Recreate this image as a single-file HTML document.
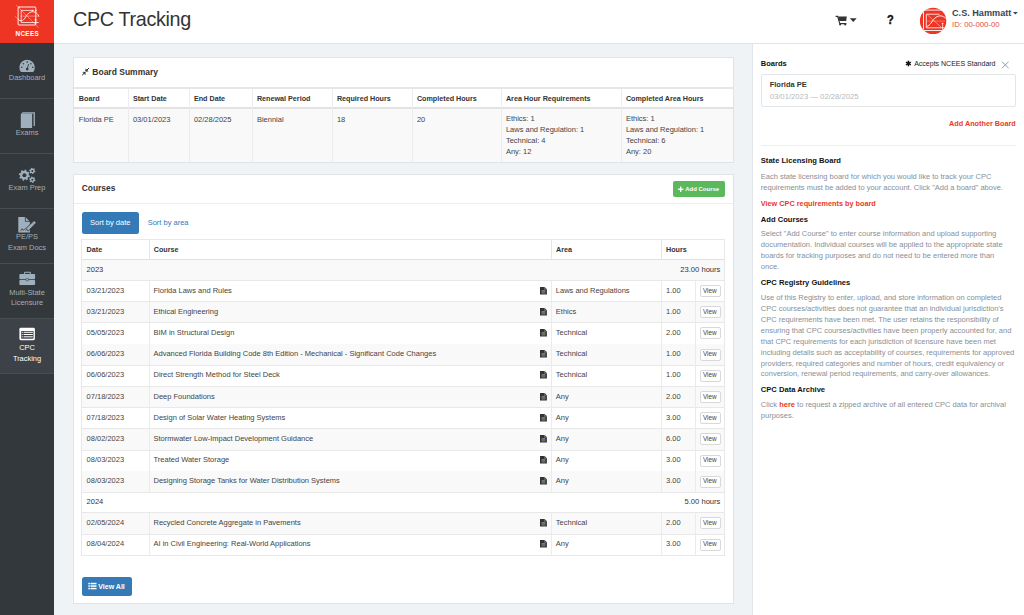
<!DOCTYPE html>
<html><head><meta charset="utf-8">
<style>
*{box-sizing:border-box;margin:0;padding:0}
html,body{width:1024px;height:615px;overflow:hidden}
body{position:relative;background:#eff3f6;font-family:"Liberation Sans",sans-serif;color:#333;font-size:7.5px}
.abs{position:absolute}
.t1{position:absolute;white-space:nowrap}
svg{position:absolute;overflow:visible}
</style></head><body>
<div class="abs" style="left:0px;top:0px;width:54px;height:615px;background:#33383c"></div>
<div class="abs" style="left:0px;top:0px;width:54px;height:43px;background:#ee3524"></div>
<div class="abs" style="left:0px;top:318px;width:54px;height:55px;background:#3c4248"></div>
<div class="abs" style="left:0px;top:98px;width:54px;height:1px;background:#484d52"></div>
<div class="abs" style="left:0px;top:153px;width:54px;height:1px;background:#484d52"></div>
<div class="abs" style="left:0px;top:208px;width:54px;height:1px;background:#484d52"></div>
<div class="abs" style="left:0px;top:263px;width:54px;height:1px;background:#484d52"></div>
<div class="abs" style="left:0px;top:318px;width:54px;height:1px;background:#484d52"></div>
<div class="abs" style="left:0px;top:373px;width:54px;height:1px;background:#484d52"></div>
<div class="t1" style="left:0;width:54px;text-align:center;top:72.02px;font-size:7.45px;line-height:12px;color:#a5afb7">Dashboard</div>
<div class="t1" style="left:0;width:54px;text-align:center;top:127.42px;font-size:7.45px;line-height:12px;color:#a5afb7">Exams</div>
<div class="t1" style="left:0;width:54px;text-align:center;top:182.42px;font-size:7.45px;line-height:12px;color:#a5afb7">Exam Prep</div>
<div class="t1" style="left:0;width:54px;text-align:center;top:231.22px;font-size:7.45px;line-height:12px;color:#a5afb7">PE/PS</div>
<div class="t1" style="left:0;width:54px;text-align:center;top:242.32px;font-size:7.45px;line-height:12px;color:#a5afb7">Exam Docs</div>
<div class="t1" style="left:0;width:54px;text-align:center;top:286.52px;font-size:7.45px;line-height:12px;color:#a5afb7">Multi-State</div>
<div class="t1" style="left:0;width:54px;text-align:center;top:297.32px;font-size:7.45px;line-height:12px;color:#a5afb7">Licensure</div>
<div class="t1" style="left:0;width:54px;text-align:center;top:342.02px;font-size:7.45px;line-height:12px;color:#fff">CPC</div>
<div class="t1" style="left:0;width:54px;text-align:center;top:352.52px;font-size:7.45px;line-height:12px;color:#fff">Tracking</div>
<svg style="left:0;top:0" width="54" height="43" viewBox="0 0 54 43">
<g fill="none" stroke="#fff" stroke-linecap="round">
<path stroke-width="0.9" d="M19 7 H35 Q35.8 7 35.8 7.8 V24.2 Q35.8 25 35 25 H19 Q18.1 25 18.1 24.2 V7.8 Q18.1 7 19 7 Z"/>
<path stroke-width="0.75" d="M32.9 10.4 H21.2 V22.5 H38.4"/>
<line stroke-width="0.5" stroke-opacity="0.75" x1="16.2" y1="5.1" x2="38.4" y2="27.5"/>
<line stroke-width="0.5" stroke-opacity="0.8" x1="15.3" y1="16.5" x2="18.5" y2="19.5"/>
<line stroke-width="0.5" stroke-opacity="0.75" x1="21.2" y1="16.1" x2="38.8" y2="16.1"/>
<path stroke-width="0.85" d="M18.5 19.5 Q19.6 21 21.5 20.8 C24.5 20.5, 26 15.5, 28 13.8 C30 12, 32 11.4, 34 11.9 C36.5 12.5, 38 14.2, 38.8 16.1"/>
<path stroke-width="0.7" d="M35.6 24.1 V19.1 M34.9 19.9 L35.6 19 L36.3 19.9"/>
<circle stroke-width="0.6" cx="32.5" cy="10.6" r="0.5"/><circle stroke-width="0.5" cx="35.8" cy="10.6" r="0.4"/>
</g>
<text x="27.3" y="36" text-anchor="middle" font-family="Liberation Sans" font-weight="bold" font-size="6.3" letter-spacing="0.35" fill="#fff">NCEES</text>
</svg>
<svg style="left:0;top:43px" width="54" height="55" viewBox="0 0 54 55">
<path d="M21 29.1 A7.7 7.7 0 1 1 33.2 29.1 Z" fill="#9fb0bc" />
<g fill="#33383c"><circle cx="27.2" cy="19.1" r="0.8"/><circle cx="23.4" cy="20.7" r="0.8"/><circle cx="30.9" cy="20.7" r="0.8"/><circle cx="21.8" cy="24.3" r="0.8"/><circle cx="32.7" cy="24.3" r="0.8"/><circle cx="27.2" cy="26.1" r="1.35"/></g>
<line x1="27.2" y1="26" x2="28.6" y2="21.2" stroke="#33383c" stroke-width="0.9"/>
</svg>
<svg style="left:0;top:98px" width="54" height="55" viewBox="0 0 54 55">
<path d="M22.3 14.3 H34.9 V27.9 H33.6 V15.6 H22.3 Z" fill="#9fb0bc"/>
<path d="M20.8 16.9 Q20.8 15.8 21.6 15.2 L22.3 14.6 V15.6 L32.1 15.6 V30 H20.8 Z" fill="#9fb0bc"/>
</svg>
<svg style="left:0;top:153px" width="54" height="55" viewBox="0 0 54 55"><polygon points="28.80,22.20 29.98,22.73 29.65,24.14 28.37,24.10 27.51,25.31 27.97,26.51 26.74,27.29 25.86,26.35 24.40,26.60 23.87,27.78 22.46,27.45 22.50,26.17 21.29,25.31 20.09,25.77 19.31,24.54 20.25,23.66 20.00,22.20 18.82,21.67 19.15,20.26 20.43,20.30 21.29,19.09 20.83,17.89 22.06,17.11 22.94,18.05 24.40,17.80 24.93,16.62 26.34,16.95 26.30,18.23 27.51,19.09 28.71,18.63 29.49,19.86 28.55,20.74" fill="#9fb0bc"/><circle cx="24.4" cy="22.2" r="2.0" fill="#33383c"/><polygon points="34.70,17.90 35.47,18.30 35.15,19.35 34.28,19.25 33.50,19.98 33.54,20.85 32.47,21.10 32.12,20.29 31.10,19.98 30.37,20.45 29.62,19.64 30.14,18.94 29.90,17.90 29.13,17.50 29.45,16.45 30.32,16.55 31.10,15.82 31.06,14.95 32.13,14.70 32.48,15.51 33.50,15.82 34.23,15.35 34.98,16.16 34.46,16.86" fill="#9fb0bc"/><circle cx="32.3" cy="17.9" r="1.0" fill="#33383c"/><polygon points="34.70,26.70 35.47,27.10 35.15,28.15 34.28,28.05 33.50,28.78 33.54,29.65 32.47,29.90 32.12,29.09 31.10,28.78 30.37,29.25 29.62,28.44 30.14,27.74 29.90,26.70 29.13,26.30 29.45,25.25 30.32,25.35 31.10,24.62 31.06,23.75 32.13,23.50 32.48,24.31 33.50,24.62 34.23,24.15 34.98,24.96 34.46,25.66" fill="#9fb0bc"/><circle cx="32.3" cy="26.7" r="1.0" fill="#33383c"/></svg>
<svg style="left:0;top:208px" width="54" height="55" viewBox="0 0 54 55">
<path d="M18.3 8.9 H25.4 L29.9 13.4 V24.5 H18.3 Z" fill="#9fb0bc"/>
<path d="M25.4 8.9 V13.4 H29.9" fill="none" stroke="#33383c" stroke-width="0.8"/>
<line x1="26.6" y1="22.2" x2="35.2" y2="13.7" stroke="#33383c" stroke-width="4"/>
<line x1="27.3" y1="21.5" x2="35" y2="13.9" stroke="#9fb0bc" stroke-width="2.6"/>
<line x1="33.3" y1="15.6" x2="34.2" y2="16.4" stroke="#33383c" stroke-width="0.6"/>
<path d="M25.7 23.2 L26.3 21.6 L27.6 22.8 Z" fill="#9fb0bc"/>
<polyline points="20.6,23.2 22,20.7 23.1,22.3 24.3,21.2 25.6,22.4" fill="none" stroke="#33383c" stroke-width="0.8"/>
</svg>
<svg style="left:0;top:263px" width="54" height="55" viewBox="0 0 54 55">
<path d="M24.1 10.9 L24.1 9.5 Q24.1 8.7 24.9 8.7 L30 8.7 Q30.8 8.7 30.8 9.5 L30.8 10.9 L29.8 10.9 L29.8 9.7 L25.1 9.7 L25.1 10.9 Z" fill="#9fb0bc"/>
<rect x="19.4" y="10.9" width="15.7" height="5.4" rx="0.8" fill="#9fb0bc"/>
<rect x="19.4" y="16.9" width="15.7" height="5.1" rx="0.8" fill="#9fb0bc"/>
<rect x="25.9" y="15.6" width="2.6" height="2.2" rx="0.3" fill="#9fb0bc" stroke="#33383c" stroke-width="0.5"/>
</svg>
<svg style="left:0;top:318px" width="54" height="55" viewBox="0 0 54 55">
<rect x="19.4" y="9.8" width="15.5" height="12.4" rx="1.4" fill="#fff"/>
<rect x="21.2" y="13" width="12.3" height="7.7" fill="#3c4248"/>
<g fill="#fff"><rect x="21.8" y="13.8" width="0.9" height="1"/><rect x="21.8" y="16" width="0.9" height="1"/><rect x="21.8" y="18.3" width="0.9" height="1"/>
<rect x="23.6" y="13.8" width="9.2" height="1"/><rect x="23.6" y="16" width="9.2" height="1"/><rect x="23.6" y="18.3" width="9.2" height="1"/></g>
</svg>
<div class="abs" style="left:54px;top:0px;width:970px;height:43px;background:#fff"></div>
<div class="abs" style="left:54px;top:43px;width:970px;height:1px;background:#dde3e9"></div>
<div class="t1" style="left:73px;top:12.94px;font-size:19.8px;line-height:12px;font-weight:normal;color:#333;letter-spacing:-0.35px">CPC Tracking</div>
<svg style="left:830px;top:8px" width="30" height="24" viewBox="0 0 30 24">
<path d="M5.6 8.4 L7.6 8.4 L9.8 15.6 L16.4 15.6" fill="none" stroke="#333" stroke-width="1.1"/>
<path d="M8 8.6 L16.8 8.6 L16.2 13.1 L9.3 13.1 Z" fill="#333"/>
<circle cx="10.1" cy="16.4" r="1" fill="#333"/><circle cx="15.2" cy="16.4" r="1" fill="#333"/>
<path d="M19.8 10.3 L26.7 10.3 L23.25 14 Z" fill="#333"/>
</svg>
<div class="t1" style="left:886.6px;top:14.44px;font-size:12px;line-height:12px;font-weight:bold;color:#111;-webkit-text-stroke:0.35px #111;transform:scaleX(0.92);transform-origin:left">?</div>
<svg style="left:915px;top:3px" width="36" height="36" viewBox="0 0 36 36">
<defs><clipPath id="cc"><circle cx="18.1" cy="17.9" r="13.2"/></clipPath></defs>
<circle cx="18.1" cy="17.9" r="13.2" fill="#ee3524"/>
<g clip-path="url(#cc)" fill="none" stroke="#fff">
<line stroke-width="0.9" x1="9.5" y1="7.1" x2="27" y2="7.1"/>
<line stroke-width="0.9" x1="9" y1="27.5" x2="27" y2="27.5"/>
<line stroke-width="0.9" x1="8.5" y1="8" x2="8.5" y2="26.5"/>
<path stroke-width="0.8" d="M24.5 11.2 H11.3 V24.8 H29.5"/>
<line stroke-width="0.55" stroke-opacity="0.8" x1="12.2" y1="11.7" x2="26.5" y2="24.5"/>
<line stroke-width="0.55" stroke-opacity="0.6" x1="12.2" y1="18.1" x2="30" y2="18.1"/>
<path stroke-width="0.95" d="M11.8 23.3 C15 23, 17 18, 19.5 15.5 C21.5 13.5, 24 12.6, 26 12.9 C28 13.2, 29.5 14.2, 30.8 15.3"/>
<path stroke-width="0.7" d="M27.6 27.5 V20 M26.9 20.9 L27.6 19.9 L28.3 20.9"/>
</g>
</svg>
<div class="t1" style="left:952px;top:6.83px;font-size:9.15px;line-height:12px;font-weight:bold;color:#3b4450;">C.S. Hammatt</div>
<svg style="left:1012px;top:11px" width="8" height="5" viewBox="0 0 8 5"><path d="M1 1 L5.8 1 L3.4 3.6 Z" fill="#3b4450"/></svg>
<div class="t1" style="left:952px;top:19.10px;font-size:7.8px;line-height:12px;font-weight:normal;color:#e74c3c;">ID: 00-000-00</div>
<div class="abs" style="left:752px;top:44px;width:272px;height:571px;background:#fff;border-left:1px solid #e1e6ea"></div>
<div class="t1" style="left:760.8px;top:58.00px;font-size:7.5px;line-height:12px;font-weight:bold;color:#111;">Boards</div>
<svg style="left:903px;top:59px" width="10" height="10" viewBox="0 0 10 10"><g stroke="#111" stroke-width="1.5" stroke-linecap="butt"><line x1="5.4" y1="1.7" x2="5.4" y2="7.3"/><line x1="3" y1="3.1" x2="7.8" y2="5.9"/><line x1="3" y1="5.9" x2="7.8" y2="3.1"/></g></svg>
<div class="t1" style="left:914.2px;top:58.17px;font-size:7.0px;line-height:12px;font-weight:normal;color:#222;">Accepts NCEES Standard</div>
<svg style="left:1000px;top:60px" width="10" height="10" viewBox="0 0 10 10"><g stroke="#8494a1" stroke-width="0.9"><line x1="2" y1="1.6" x2="8.6" y2="8.2"/><line x1="8.6" y1="1.6" x2="2" y2="8.2"/></g></svg>
<div class="abs" style="left:760.8px;top:74.4px;width:255px;height:32.2px;border:1px solid #e3e6e9;border-radius:2px;background:#fff"></div>
<div class="t1" style="left:769.7px;top:78.90px;font-size:7.5px;line-height:12px;font-weight:bold;color:#333;">Florida PE</div>
<div class="t1" style="left:769.7px;top:90.63px;font-size:7.7px;line-height:12px;font-weight:normal;color:#b5b9bd;">03/01/2023 &mdash; 02/28/2025</div>
<div class="t1" style="right:8.30px;top:117.98px;font-size:7.26px;line-height:12px;font-weight:bold;color:#e8392b;text-align:right;">Add Another Board</div>
<div class="abs" style="left:760.8px;top:145px;width:255px;height:1px;background:#eceff2"></div>
<div class="t1" style="left:760.8px;top:155.47px;font-size:7.6px;line-height:12px;font-weight:bold;color:#111;">State Licensing Board</div>
<div class="t1" style="left:760.8px;top:170.70px;font-size:7.5px;line-height:12px;font-weight:normal;color:#878f98;">Each state licensing board for which you would like to track your CPC</div>
<div class="t1" style="left:760.8px;top:181.80px;font-size:7.5px;line-height:12px;font-weight:normal;color:#878f98;">requirements must be added to your account. Click "Add a board" above.</div>
<div class="t1" style="left:760.8px;top:197.97px;font-size:7.3px;line-height:12px;font-weight:bold;color:#e8392b;">View CPC requirements by board</div>
<div class="t1" style="left:760.8px;top:213.67px;font-size:7.6px;line-height:12px;font-weight:bold;color:#111;">Add Courses</div>
<div class="t1" style="left:760.8px;top:228.40px;font-size:7.5px;line-height:12px;font-weight:normal;color:#878f98;">Select "Add Course" to enter course information and upload supporting</div>
<div class="t1" style="left:760.8px;top:239.30px;font-size:7.5px;line-height:12px;font-weight:normal;color:#878f98;">documentation. Individual courses will be applied to the appropriate state</div>
<div class="t1" style="left:760.8px;top:250.20px;font-size:7.5px;line-height:12px;font-weight:normal;color:#878f98;">boards for tracking purposes and do not need to be entered more than</div>
<div class="t1" style="left:760.8px;top:261.10px;font-size:7.5px;line-height:12px;font-weight:normal;color:#878f98;">once.</div>
<div class="t1" style="left:760.8px;top:276.67px;font-size:7.6px;line-height:12px;font-weight:bold;color:#111;">CPC Registry Guidelines</div>
<div class="t1" style="left:760.8px;top:292.40px;font-size:7.5px;line-height:12px;font-weight:normal;color:#878f98;">Use of this Registry to enter, upload, and store information on completed</div>
<div class="t1" style="left:760.8px;top:303.25px;font-size:7.5px;line-height:12px;font-weight:normal;color:#878f98;">CPC courses/activities does not guarantee that an individual jurisdiction's</div>
<div class="t1" style="left:760.8px;top:314.10px;font-size:7.5px;line-height:12px;font-weight:normal;color:#878f98;">CPC requirements have been met. The user retains the responsibility of</div>
<div class="t1" style="left:760.8px;top:324.95px;font-size:7.5px;line-height:12px;font-weight:normal;color:#878f98;">ensuring that CPC courses/activities have been properly accounted for, and</div>
<div class="t1" style="left:760.8px;top:335.80px;font-size:7.5px;line-height:12px;font-weight:normal;color:#878f98;">that CPC requirements for each jurisdiction of licensure have been met</div>
<div class="t1" style="left:760.8px;top:346.65px;font-size:7.5px;line-height:12px;font-weight:normal;color:#878f98;">including details such as acceptability of courses, requirements for approved</div>
<div class="t1" style="left:760.8px;top:357.50px;font-size:7.5px;line-height:12px;font-weight:normal;color:#878f98;">providers, required categories and number of hours, credit equivalency or</div>
<div class="t1" style="left:760.8px;top:368.35px;font-size:7.5px;line-height:12px;font-weight:normal;color:#878f98;">conversion, renewal period requirements, and carry-over allowances.</div>
<div class="t1" style="left:760.8px;top:384.17px;font-size:7.6px;line-height:12px;font-weight:bold;color:#111;">CPC Data Archive</div>
<div class="t1" style="left:760.8px;top:398.90px;font-size:7.5px;line-height:12px;font-weight:normal;color:#878f98;">Click <b style="color:#e8392b">here</b> to request a zipped archive of all entered CPC data for archival</div>
<div class="t1" style="left:760.8px;top:409.70px;font-size:7.5px;line-height:12px;font-weight:normal;color:#878f98;">purposes.</div>
<div class="abs" style="left:73px;top:57px;width:661px;height:106px;background:#fff;border:1px solid #e0e4e8"></div>
<svg style="left:78px;top:62px" width="14" height="16" viewBox="0 0 14 16">
<g stroke="#222" stroke-width="1.0" stroke-linecap="round" fill="#222">
<line x1="4.5" y1="12.9" x2="6.2" y2="11.3"/><path d="M5.2 10.3 L7.3 10.2 L7.2 12.3 Z" stroke-width="0.5"/>
<line x1="10.7" y1="6.3" x2="8.8" y2="8.2"/><path d="M9.8 9.2 L7.7 9.3 L7.8 7.2 Z" stroke-width="0.5"/>
</g></svg>
<div class="t1" style="left:92.3px;top:65.85px;font-size:8.5px;line-height:12px;font-weight:bold;color:#333;">Board Summary</div>
<div class="abs" style="left:74px;top:87.4px;width:659px;height:1.3px;background:#e4e6e8"></div>
<div class="abs" style="left:74px;top:108px;width:659px;height:54px;background:#f9f9f9"></div>
<div class="abs" style="left:74px;top:107.4px;width:659px;height:1.3px;background:#e2e2e2"></div>
<div class="abs" style="left:128px;top:88.5px;width:1px;height:73.5px;background:#ececec"></div>
<div class="abs" style="left:189px;top:88.5px;width:1px;height:73.5px;background:#ececec"></div>
<div class="abs" style="left:252px;top:88.5px;width:1px;height:73.5px;background:#ececec"></div>
<div class="abs" style="left:332px;top:88.5px;width:1px;height:73.5px;background:#ececec"></div>
<div class="abs" style="left:412px;top:88.5px;width:1px;height:73.5px;background:#ececec"></div>
<div class="abs" style="left:501px;top:88.5px;width:1px;height:73.5px;background:#ececec"></div>
<div class="abs" style="left:621px;top:88.5px;width:1px;height:73.5px;background:#ececec"></div>
<div class="t1" style="left:78.80000000000001px;top:93.00px;font-size:7.2px;line-height:12px;font-weight:bold;color:#333;">Board</div>
<div class="t1" style="left:132.9px;top:93.00px;font-size:7.2px;line-height:12px;font-weight:bold;color:#333;">Start Date</div>
<div class="t1" style="left:193.9px;top:93.00px;font-size:7.2px;line-height:12px;font-weight:bold;color:#333;">End Date</div>
<div class="t1" style="left:256.9px;top:93.00px;font-size:7.2px;line-height:12px;font-weight:bold;color:#333;">Renewal Period</div>
<div class="t1" style="left:336.9px;top:93.00px;font-size:7.2px;line-height:12px;font-weight:bold;color:#333;">Required Hours</div>
<div class="t1" style="left:416.9px;top:93.00px;font-size:7.2px;line-height:12px;font-weight:bold;color:#333;">Completed Hours</div>
<div class="t1" style="left:505.9px;top:93.00px;font-size:7.2px;line-height:12px;font-weight:bold;color:#333;">Area Hour Requirements</div>
<div class="t1" style="left:625.9px;top:93.00px;font-size:7.2px;line-height:12px;font-weight:bold;color:#333;">Completed Area Hours</div>
<div class="t1" style="left:78.80000000000001px;top:113.60px;font-size:7.5px;line-height:12px;font-weight:normal;color:#444;">Florida PE</div>
<div class="t1" style="left:132.9px;top:113.60px;font-size:7.5px;line-height:12px;font-weight:normal;color:#444;">03/01/2023</div>
<div class="t1" style="left:193.9px;top:113.60px;font-size:7.5px;line-height:12px;font-weight:normal;color:#444;">02/28/2025</div>
<div class="t1" style="left:256.9px;top:113.60px;font-size:7.5px;line-height:12px;font-weight:normal;color:#444;">Biennial</div>
<div class="t1" style="left:336.9px;top:113.60px;font-size:7.5px;line-height:12px;font-weight:normal;color:#444;">18</div>
<div class="t1" style="left:416.9px;top:113.60px;font-size:7.5px;line-height:12px;font-weight:normal;color:#444;">20</div>
<div class="t1" style="left:505.9px;top:113.40px;font-size:7.5px;line-height:12px;font-weight:normal;color:#444;">Ethics: 1</div>
<div class="t1" style="left:505.9px;top:124.15px;font-size:7.5px;line-height:12px;font-weight:normal;color:#444;">Laws and Regulation: 1</div>
<div class="t1" style="left:505.9px;top:134.90px;font-size:7.5px;line-height:12px;font-weight:normal;color:#444;">Technical: 4</div>
<div class="t1" style="left:505.9px;top:145.65px;font-size:7.5px;line-height:12px;font-weight:normal;color:#444;">Any: 12</div>
<div class="t1" style="left:625.9px;top:113.40px;font-size:7.5px;line-height:12px;font-weight:normal;color:#444;">Ethics: 1</div>
<div class="t1" style="left:625.9px;top:124.15px;font-size:7.5px;line-height:12px;font-weight:normal;color:#444;">Laws and Regulation: 1</div>
<div class="t1" style="left:625.9px;top:134.90px;font-size:7.5px;line-height:12px;font-weight:normal;color:#444;">Technical: 6</div>
<div class="t1" style="left:625.9px;top:145.65px;font-size:7.5px;line-height:12px;font-weight:normal;color:#444;">Any: 20</div>
<div class="abs" style="left:73px;top:174px;width:661px;height:430px;background:#fff;border:1px solid #e0e4e8"></div>
<div class="t1" style="left:81.8px;top:182.09px;font-size:8.4px;line-height:12px;font-weight:bold;color:#333;">Courses</div>
<div class="abs" style="left:672.6px;top:180.8px;width:52.4px;height:15.8px;background:#5cb85c;border-radius:2px"></div>
<svg style="left:677px;top:184.8px" width="8" height="9" viewBox="0 0 8 9"><g stroke="#fff" stroke-width="1.3"><line x1="1" y1="4.2" x2="6.4" y2="4.2"/><line x1="3.7" y1="1.5" x2="3.7" y2="6.9"/></g></svg>
<div class="t1" style="left:685.2px;top:182.82px;font-size:6px;line-height:12px;font-weight:bold;color:#fff;">Add Course</div>
<div class="abs" style="left:74px;top:203px;width:659px;height:1px;background:#eceef0"></div>
<div class="abs" style="left:81.8px;top:212px;width:56.9px;height:21.8px;background:#337ab7;border-radius:2.5px"></div>
<div class="t1" style="left:90px;top:217.00px;font-size:7.5px;line-height:12px;font-weight:normal;color:#fff;">Sort by date</div>
<div class="t1" style="left:147.7px;top:217.00px;font-size:7.5px;line-height:12px;font-weight:normal;color:#337ab7;">Sort by area</div>
<div class="abs" style="left:81px;top:239.3px;width:644px;height:316.7px;border:1px solid #e8e8e8"></div>
<div class="t1" style="left:86px;top:243.50px;font-size:7.2px;line-height:12px;font-weight:normal;color:#333;"></div>
<div class="t1" style="left:86.6px;top:243.70px;font-size:7.2px;line-height:12px;font-weight:bold;color:#333;">Date</div>
<div class="t1" style="left:153.7px;top:243.70px;font-size:7.2px;line-height:12px;font-weight:bold;color:#333;">Course</div>
<div class="t1" style="left:556px;top:243.70px;font-size:7.2px;line-height:12px;font-weight:bold;color:#333;">Area</div>
<div class="t1" style="left:666px;top:243.70px;font-size:7.2px;line-height:12px;font-weight:bold;color:#333;">Hours</div>
<div class="abs" style="left:149px;top:239.8px;width:1px;height:20.3px;background:#e6e6e6"></div>
<div class="abs" style="left:551px;top:239.8px;width:1px;height:20.3px;background:#e6e6e6"></div>
<div class="abs" style="left:661px;top:239.8px;width:1px;height:20.3px;background:#e6e6e6"></div>
<div class="abs" style="left:82px;top:259px;width:642px;height:1.4px;background:#e0e0e0"></div>
<div class="abs" style="left:82px;top:260.2px;width:642px;height:20.3px;background:#f9f9f9"></div>
<div class="abs" style="left:82px;top:280.0px;width:642px;height:1px;background:#e8e8e8"></div>
<div class="t1" style="left:86.6px;top:263.90px;font-size:7.5px;line-height:12px;font-weight:normal;color:#333;">2023</div>
<div class="t1" style="right:303.60px;top:263.87px;font-size:7.6px;line-height:12px;font-weight:normal;color:#333;text-align:right;">23.00 hours</div>
<div class="abs" style="left:82px;top:301.2px;width:642px;height:1px;background:#e8e8e8"></div>
<div class="abs" style="left:149px;top:280.5px;width:1px;height:21.2px;background:#ebebeb"></div>
<div class="abs" style="left:551px;top:280.5px;width:1px;height:21.2px;background:#ebebeb"></div>
<div class="abs" style="left:661px;top:280.5px;width:1px;height:21.2px;background:#ebebeb"></div>
<div class="abs" style="left:695px;top:280.5px;width:1px;height:21.2px;background:#ebebeb"></div>
<div class="t1" style="left:86.6px;top:284.50px;font-size:7.5px;line-height:12px;font-weight:normal;color:#444;">03/21/2023</div>
<div class="t1" style="left:153.5px;top:284.50px;font-size:7.5px;line-height:12px;font-weight:normal;color:#444;">Florida Laws and Rules</div>
<div class="t1" style="left:555.8px;top:284.50px;font-size:7.5px;line-height:12px;font-weight:normal;color:#444;">Laws and Regulations</div>
<div class="t1" style="left:666.1px;top:284.50px;font-size:7.5px;line-height:12px;font-weight:normal;color:#444;">1.00</div>
<svg style="left:539.9px;top:286.60px" width="8" height="8" viewBox="0 0 8 8"><path d="M0 0 L4.6 0 L6.9 2.3 L6.9 7.5 L0 7.5 Z" fill="#333"/><path d="M4.6 0.2 L4.6 2.3 L6.7 2.3" fill="none" stroke="#aaa" stroke-width="0.5"/><rect x="1.6" y="3.2" width="3.7" height="3.2" fill="#8a8a8a"/><g fill="#444"><rect x="1.6" y="4.1" width="3.7" height="0.45"/><rect x="1.6" y="5.1" width="3.7" height="0.45"/></g></svg>
<div class="abs" style="left:699.6px;top:285.0px;width:21px;height:12px;background:#fff;border:1px solid #d9d9d9;border-radius:2px"></div>
<div class="t1" style="left:702.9px;top:284.58px;font-size:6.4px;line-height:12px;font-weight:normal;color:#444;">View</div>
<div class="abs" style="left:82px;top:301.7px;width:642px;height:21.2px;background:#f9f9f9"></div>
<div class="abs" style="left:82px;top:322.4px;width:642px;height:1px;background:#e8e8e8"></div>
<div class="abs" style="left:149px;top:301.7px;width:1px;height:21.2px;background:#ebebeb"></div>
<div class="abs" style="left:551px;top:301.7px;width:1px;height:21.2px;background:#ebebeb"></div>
<div class="abs" style="left:661px;top:301.7px;width:1px;height:21.2px;background:#ebebeb"></div>
<div class="abs" style="left:695px;top:301.7px;width:1px;height:21.2px;background:#ebebeb"></div>
<div class="t1" style="left:86.6px;top:305.70px;font-size:7.5px;line-height:12px;font-weight:normal;color:#444;">03/21/2023</div>
<div class="t1" style="left:153.5px;top:305.70px;font-size:7.5px;line-height:12px;font-weight:normal;color:#444;">Ethical Engineering</div>
<div class="t1" style="left:555.8px;top:305.70px;font-size:7.5px;line-height:12px;font-weight:normal;color:#444;">Ethics</div>
<div class="t1" style="left:666.1px;top:305.70px;font-size:7.5px;line-height:12px;font-weight:normal;color:#444;">1.00</div>
<svg style="left:539.9px;top:307.80px" width="8" height="8" viewBox="0 0 8 8"><path d="M0 0 L4.6 0 L6.9 2.3 L6.9 7.5 L0 7.5 Z" fill="#333"/><path d="M4.6 0.2 L4.6 2.3 L6.7 2.3" fill="none" stroke="#aaa" stroke-width="0.5"/><rect x="1.6" y="3.2" width="3.7" height="3.2" fill="#8a8a8a"/><g fill="#444"><rect x="1.6" y="4.1" width="3.7" height="0.45"/><rect x="1.6" y="5.1" width="3.7" height="0.45"/></g></svg>
<div class="abs" style="left:699.6px;top:306.2px;width:21px;height:12px;background:#fff;border:1px solid #d9d9d9;border-radius:2px"></div>
<div class="t1" style="left:702.9px;top:305.78px;font-size:6.4px;line-height:12px;font-weight:normal;color:#444;">View</div>
<div class="abs" style="left:82px;top:343.59999999999997px;width:642px;height:1px;background:#e8e8e8"></div>
<div class="abs" style="left:149px;top:322.9px;width:1px;height:21.2px;background:#ebebeb"></div>
<div class="abs" style="left:551px;top:322.9px;width:1px;height:21.2px;background:#ebebeb"></div>
<div class="abs" style="left:661px;top:322.9px;width:1px;height:21.2px;background:#ebebeb"></div>
<div class="abs" style="left:695px;top:322.9px;width:1px;height:21.2px;background:#ebebeb"></div>
<div class="t1" style="left:86.6px;top:326.90px;font-size:7.5px;line-height:12px;font-weight:normal;color:#444;">05/05/2023</div>
<div class="t1" style="left:153.5px;top:326.90px;font-size:7.5px;line-height:12px;font-weight:normal;color:#444;">BIM in Structural Design</div>
<div class="t1" style="left:555.8px;top:326.90px;font-size:7.5px;line-height:12px;font-weight:normal;color:#444;">Technical</div>
<div class="t1" style="left:666.1px;top:326.90px;font-size:7.5px;line-height:12px;font-weight:normal;color:#444;">2.00</div>
<svg style="left:539.9px;top:329.00px" width="8" height="8" viewBox="0 0 8 8"><path d="M0 0 L4.6 0 L6.9 2.3 L6.9 7.5 L0 7.5 Z" fill="#333"/><path d="M4.6 0.2 L4.6 2.3 L6.7 2.3" fill="none" stroke="#aaa" stroke-width="0.5"/><rect x="1.6" y="3.2" width="3.7" height="3.2" fill="#8a8a8a"/><g fill="#444"><rect x="1.6" y="4.1" width="3.7" height="0.45"/><rect x="1.6" y="5.1" width="3.7" height="0.45"/></g></svg>
<div class="abs" style="left:699.6px;top:327.4px;width:21px;height:12px;background:#fff;border:1px solid #d9d9d9;border-radius:2px"></div>
<div class="t1" style="left:702.9px;top:326.98px;font-size:6.4px;line-height:12px;font-weight:normal;color:#444;">View</div>
<div class="abs" style="left:82px;top:344.09999999999997px;width:642px;height:21.2px;background:#f9f9f9"></div>
<div class="abs" style="left:82px;top:364.79999999999995px;width:642px;height:1px;background:#e8e8e8"></div>
<div class="abs" style="left:149px;top:344.09999999999997px;width:1px;height:21.2px;background:#ebebeb"></div>
<div class="abs" style="left:551px;top:344.09999999999997px;width:1px;height:21.2px;background:#ebebeb"></div>
<div class="abs" style="left:661px;top:344.09999999999997px;width:1px;height:21.2px;background:#ebebeb"></div>
<div class="abs" style="left:695px;top:344.09999999999997px;width:1px;height:21.2px;background:#ebebeb"></div>
<div class="t1" style="left:86.6px;top:348.10px;font-size:7.5px;line-height:12px;font-weight:normal;color:#444;">06/06/2023</div>
<div class="t1" style="left:153.5px;top:348.10px;font-size:7.5px;line-height:12px;font-weight:normal;color:#444;">Advanced Florida Building Code 8th Edition - Mechanical - Significant Code Changes</div>
<div class="t1" style="left:555.8px;top:348.10px;font-size:7.5px;line-height:12px;font-weight:normal;color:#444;">Technical</div>
<div class="t1" style="left:666.1px;top:348.10px;font-size:7.5px;line-height:12px;font-weight:normal;color:#444;">1.00</div>
<svg style="left:539.9px;top:350.20px" width="8" height="8" viewBox="0 0 8 8"><path d="M0 0 L4.6 0 L6.9 2.3 L6.9 7.5 L0 7.5 Z" fill="#333"/><path d="M4.6 0.2 L4.6 2.3 L6.7 2.3" fill="none" stroke="#aaa" stroke-width="0.5"/><rect x="1.6" y="3.2" width="3.7" height="3.2" fill="#8a8a8a"/><g fill="#444"><rect x="1.6" y="4.1" width="3.7" height="0.45"/><rect x="1.6" y="5.1" width="3.7" height="0.45"/></g></svg>
<div class="abs" style="left:699.6px;top:348.59999999999997px;width:21px;height:12px;background:#fff;border:1px solid #d9d9d9;border-radius:2px"></div>
<div class="t1" style="left:702.9px;top:348.18px;font-size:6.4px;line-height:12px;font-weight:normal;color:#444;">View</div>
<div class="abs" style="left:82px;top:385.99999999999994px;width:642px;height:1px;background:#e8e8e8"></div>
<div class="abs" style="left:149px;top:365.29999999999995px;width:1px;height:21.2px;background:#ebebeb"></div>
<div class="abs" style="left:551px;top:365.29999999999995px;width:1px;height:21.2px;background:#ebebeb"></div>
<div class="abs" style="left:661px;top:365.29999999999995px;width:1px;height:21.2px;background:#ebebeb"></div>
<div class="abs" style="left:695px;top:365.29999999999995px;width:1px;height:21.2px;background:#ebebeb"></div>
<div class="t1" style="left:86.6px;top:369.30px;font-size:7.5px;line-height:12px;font-weight:normal;color:#444;">06/06/2023</div>
<div class="t1" style="left:153.5px;top:369.30px;font-size:7.5px;line-height:12px;font-weight:normal;color:#444;">Direct Strength Method for Steel Deck</div>
<div class="t1" style="left:555.8px;top:369.30px;font-size:7.5px;line-height:12px;font-weight:normal;color:#444;">Technical</div>
<div class="t1" style="left:666.1px;top:369.30px;font-size:7.5px;line-height:12px;font-weight:normal;color:#444;">1.00</div>
<svg style="left:539.9px;top:371.40px" width="8" height="8" viewBox="0 0 8 8"><path d="M0 0 L4.6 0 L6.9 2.3 L6.9 7.5 L0 7.5 Z" fill="#333"/><path d="M4.6 0.2 L4.6 2.3 L6.7 2.3" fill="none" stroke="#aaa" stroke-width="0.5"/><rect x="1.6" y="3.2" width="3.7" height="3.2" fill="#8a8a8a"/><g fill="#444"><rect x="1.6" y="4.1" width="3.7" height="0.45"/><rect x="1.6" y="5.1" width="3.7" height="0.45"/></g></svg>
<div class="abs" style="left:699.6px;top:369.79999999999995px;width:21px;height:12px;background:#fff;border:1px solid #d9d9d9;border-radius:2px"></div>
<div class="t1" style="left:702.9px;top:369.38px;font-size:6.4px;line-height:12px;font-weight:normal;color:#444;">View</div>
<div class="abs" style="left:82px;top:386.49999999999994px;width:642px;height:21.2px;background:#f9f9f9"></div>
<div class="abs" style="left:82px;top:407.19999999999993px;width:642px;height:1px;background:#e8e8e8"></div>
<div class="abs" style="left:149px;top:386.49999999999994px;width:1px;height:21.2px;background:#ebebeb"></div>
<div class="abs" style="left:551px;top:386.49999999999994px;width:1px;height:21.2px;background:#ebebeb"></div>
<div class="abs" style="left:661px;top:386.49999999999994px;width:1px;height:21.2px;background:#ebebeb"></div>
<div class="abs" style="left:695px;top:386.49999999999994px;width:1px;height:21.2px;background:#ebebeb"></div>
<div class="t1" style="left:86.6px;top:390.50px;font-size:7.5px;line-height:12px;font-weight:normal;color:#444;">07/18/2023</div>
<div class="t1" style="left:153.5px;top:390.50px;font-size:7.5px;line-height:12px;font-weight:normal;color:#444;">Deep Foundations</div>
<div class="t1" style="left:555.8px;top:390.50px;font-size:7.5px;line-height:12px;font-weight:normal;color:#444;">Any</div>
<div class="t1" style="left:666.1px;top:390.50px;font-size:7.5px;line-height:12px;font-weight:normal;color:#444;">2.00</div>
<svg style="left:539.9px;top:392.60px" width="8" height="8" viewBox="0 0 8 8"><path d="M0 0 L4.6 0 L6.9 2.3 L6.9 7.5 L0 7.5 Z" fill="#333"/><path d="M4.6 0.2 L4.6 2.3 L6.7 2.3" fill="none" stroke="#aaa" stroke-width="0.5"/><rect x="1.6" y="3.2" width="3.7" height="3.2" fill="#8a8a8a"/><g fill="#444"><rect x="1.6" y="4.1" width="3.7" height="0.45"/><rect x="1.6" y="5.1" width="3.7" height="0.45"/></g></svg>
<div class="abs" style="left:699.6px;top:390.99999999999994px;width:21px;height:12px;background:#fff;border:1px solid #d9d9d9;border-radius:2px"></div>
<div class="t1" style="left:702.9px;top:390.58px;font-size:6.4px;line-height:12px;font-weight:normal;color:#444;">View</div>
<div class="abs" style="left:82px;top:428.3999999999999px;width:642px;height:1px;background:#e8e8e8"></div>
<div class="abs" style="left:149px;top:407.69999999999993px;width:1px;height:21.2px;background:#ebebeb"></div>
<div class="abs" style="left:551px;top:407.69999999999993px;width:1px;height:21.2px;background:#ebebeb"></div>
<div class="abs" style="left:661px;top:407.69999999999993px;width:1px;height:21.2px;background:#ebebeb"></div>
<div class="abs" style="left:695px;top:407.69999999999993px;width:1px;height:21.2px;background:#ebebeb"></div>
<div class="t1" style="left:86.6px;top:411.70px;font-size:7.5px;line-height:12px;font-weight:normal;color:#444;">07/18/2023</div>
<div class="t1" style="left:153.5px;top:411.70px;font-size:7.5px;line-height:12px;font-weight:normal;color:#444;">Design of Solar Water Heating Systems</div>
<div class="t1" style="left:555.8px;top:411.70px;font-size:7.5px;line-height:12px;font-weight:normal;color:#444;">Any</div>
<div class="t1" style="left:666.1px;top:411.70px;font-size:7.5px;line-height:12px;font-weight:normal;color:#444;">3.00</div>
<svg style="left:539.9px;top:413.80px" width="8" height="8" viewBox="0 0 8 8"><path d="M0 0 L4.6 0 L6.9 2.3 L6.9 7.5 L0 7.5 Z" fill="#333"/><path d="M4.6 0.2 L4.6 2.3 L6.7 2.3" fill="none" stroke="#aaa" stroke-width="0.5"/><rect x="1.6" y="3.2" width="3.7" height="3.2" fill="#8a8a8a"/><g fill="#444"><rect x="1.6" y="4.1" width="3.7" height="0.45"/><rect x="1.6" y="5.1" width="3.7" height="0.45"/></g></svg>
<div class="abs" style="left:699.6px;top:412.19999999999993px;width:21px;height:12px;background:#fff;border:1px solid #d9d9d9;border-radius:2px"></div>
<div class="t1" style="left:702.9px;top:411.78px;font-size:6.4px;line-height:12px;font-weight:normal;color:#444;">View</div>
<div class="abs" style="left:82px;top:428.8999999999999px;width:642px;height:21.2px;background:#f9f9f9"></div>
<div class="abs" style="left:82px;top:449.5999999999999px;width:642px;height:1px;background:#e8e8e8"></div>
<div class="abs" style="left:149px;top:428.8999999999999px;width:1px;height:21.2px;background:#ebebeb"></div>
<div class="abs" style="left:551px;top:428.8999999999999px;width:1px;height:21.2px;background:#ebebeb"></div>
<div class="abs" style="left:661px;top:428.8999999999999px;width:1px;height:21.2px;background:#ebebeb"></div>
<div class="abs" style="left:695px;top:428.8999999999999px;width:1px;height:21.2px;background:#ebebeb"></div>
<div class="t1" style="left:86.6px;top:432.90px;font-size:7.5px;line-height:12px;font-weight:normal;color:#444;">08/02/2023</div>
<div class="t1" style="left:153.5px;top:432.90px;font-size:7.5px;line-height:12px;font-weight:normal;color:#444;">Stormwater Low-Impact Development Guidance</div>
<div class="t1" style="left:555.8px;top:432.90px;font-size:7.5px;line-height:12px;font-weight:normal;color:#444;">Any</div>
<div class="t1" style="left:666.1px;top:432.90px;font-size:7.5px;line-height:12px;font-weight:normal;color:#444;">6.00</div>
<svg style="left:539.9px;top:435.00px" width="8" height="8" viewBox="0 0 8 8"><path d="M0 0 L4.6 0 L6.9 2.3 L6.9 7.5 L0 7.5 Z" fill="#333"/><path d="M4.6 0.2 L4.6 2.3 L6.7 2.3" fill="none" stroke="#aaa" stroke-width="0.5"/><rect x="1.6" y="3.2" width="3.7" height="3.2" fill="#8a8a8a"/><g fill="#444"><rect x="1.6" y="4.1" width="3.7" height="0.45"/><rect x="1.6" y="5.1" width="3.7" height="0.45"/></g></svg>
<div class="abs" style="left:699.6px;top:433.3999999999999px;width:21px;height:12px;background:#fff;border:1px solid #d9d9d9;border-radius:2px"></div>
<div class="t1" style="left:702.9px;top:432.98px;font-size:6.4px;line-height:12px;font-weight:normal;color:#444;">View</div>
<div class="abs" style="left:82px;top:470.7999999999999px;width:642px;height:1px;background:#e8e8e8"></div>
<div class="abs" style="left:149px;top:450.0999999999999px;width:1px;height:21.2px;background:#ebebeb"></div>
<div class="abs" style="left:551px;top:450.0999999999999px;width:1px;height:21.2px;background:#ebebeb"></div>
<div class="abs" style="left:661px;top:450.0999999999999px;width:1px;height:21.2px;background:#ebebeb"></div>
<div class="abs" style="left:695px;top:450.0999999999999px;width:1px;height:21.2px;background:#ebebeb"></div>
<div class="t1" style="left:86.6px;top:454.10px;font-size:7.5px;line-height:12px;font-weight:normal;color:#444;">08/03/2023</div>
<div class="t1" style="left:153.5px;top:454.10px;font-size:7.5px;line-height:12px;font-weight:normal;color:#444;">Treated Water Storage</div>
<div class="t1" style="left:555.8px;top:454.10px;font-size:7.5px;line-height:12px;font-weight:normal;color:#444;">Any</div>
<div class="t1" style="left:666.1px;top:454.10px;font-size:7.5px;line-height:12px;font-weight:normal;color:#444;">3.00</div>
<svg style="left:539.9px;top:456.20px" width="8" height="8" viewBox="0 0 8 8"><path d="M0 0 L4.6 0 L6.9 2.3 L6.9 7.5 L0 7.5 Z" fill="#333"/><path d="M4.6 0.2 L4.6 2.3 L6.7 2.3" fill="none" stroke="#aaa" stroke-width="0.5"/><rect x="1.6" y="3.2" width="3.7" height="3.2" fill="#8a8a8a"/><g fill="#444"><rect x="1.6" y="4.1" width="3.7" height="0.45"/><rect x="1.6" y="5.1" width="3.7" height="0.45"/></g></svg>
<div class="abs" style="left:699.6px;top:454.5999999999999px;width:21px;height:12px;background:#fff;border:1px solid #d9d9d9;border-radius:2px"></div>
<div class="t1" style="left:702.9px;top:454.18px;font-size:6.4px;line-height:12px;font-weight:normal;color:#444;">View</div>
<div class="abs" style="left:82px;top:471.2999999999999px;width:642px;height:21.2px;background:#f9f9f9"></div>
<div class="abs" style="left:82px;top:491.9999999999999px;width:642px;height:1px;background:#e8e8e8"></div>
<div class="abs" style="left:149px;top:471.2999999999999px;width:1px;height:21.2px;background:#ebebeb"></div>
<div class="abs" style="left:551px;top:471.2999999999999px;width:1px;height:21.2px;background:#ebebeb"></div>
<div class="abs" style="left:661px;top:471.2999999999999px;width:1px;height:21.2px;background:#ebebeb"></div>
<div class="abs" style="left:695px;top:471.2999999999999px;width:1px;height:21.2px;background:#ebebeb"></div>
<div class="t1" style="left:86.6px;top:475.30px;font-size:7.5px;line-height:12px;font-weight:normal;color:#444;">08/03/2023</div>
<div class="t1" style="left:153.5px;top:475.30px;font-size:7.5px;line-height:12px;font-weight:normal;color:#444;">Designing Storage Tanks for Water Distribution Systems</div>
<div class="t1" style="left:555.8px;top:475.30px;font-size:7.5px;line-height:12px;font-weight:normal;color:#444;">Any</div>
<div class="t1" style="left:666.1px;top:475.30px;font-size:7.5px;line-height:12px;font-weight:normal;color:#444;">3.00</div>
<svg style="left:539.9px;top:477.40px" width="8" height="8" viewBox="0 0 8 8"><path d="M0 0 L4.6 0 L6.9 2.3 L6.9 7.5 L0 7.5 Z" fill="#333"/><path d="M4.6 0.2 L4.6 2.3 L6.7 2.3" fill="none" stroke="#aaa" stroke-width="0.5"/><rect x="1.6" y="3.2" width="3.7" height="3.2" fill="#8a8a8a"/><g fill="#444"><rect x="1.6" y="4.1" width="3.7" height="0.45"/><rect x="1.6" y="5.1" width="3.7" height="0.45"/></g></svg>
<div class="abs" style="left:699.6px;top:475.7999999999999px;width:21px;height:12px;background:#fff;border:1px solid #d9d9d9;border-radius:2px"></div>
<div class="t1" style="left:702.9px;top:475.38px;font-size:6.4px;line-height:12px;font-weight:normal;color:#444;">View</div>
<div class="abs" style="left:82px;top:512.2999999999998px;width:642px;height:1px;background:#e8e8e8"></div>
<div class="t1" style="left:86.6px;top:496.20px;font-size:7.5px;line-height:12px;font-weight:normal;color:#333;">2024</div>
<div class="t1" style="right:303.60px;top:496.17px;font-size:7.6px;line-height:12px;font-weight:normal;color:#333;text-align:right;">5.00 hours</div>
<div class="abs" style="left:82px;top:512.7999999999998px;width:642px;height:21.2px;background:#f9f9f9"></div>
<div class="abs" style="left:82px;top:533.4999999999999px;width:642px;height:1px;background:#e8e8e8"></div>
<div class="abs" style="left:149px;top:512.7999999999998px;width:1px;height:21.2px;background:#ebebeb"></div>
<div class="abs" style="left:551px;top:512.7999999999998px;width:1px;height:21.2px;background:#ebebeb"></div>
<div class="abs" style="left:661px;top:512.7999999999998px;width:1px;height:21.2px;background:#ebebeb"></div>
<div class="abs" style="left:695px;top:512.7999999999998px;width:1px;height:21.2px;background:#ebebeb"></div>
<div class="t1" style="left:86.6px;top:516.80px;font-size:7.5px;line-height:12px;font-weight:normal;color:#444;">02/05/2024</div>
<div class="t1" style="left:153.5px;top:516.80px;font-size:7.5px;line-height:12px;font-weight:normal;color:#444;">Recycled Concrete Aggregate in Pavements</div>
<div class="t1" style="left:555.8px;top:516.80px;font-size:7.5px;line-height:12px;font-weight:normal;color:#444;">Technical</div>
<div class="t1" style="left:666.1px;top:516.80px;font-size:7.5px;line-height:12px;font-weight:normal;color:#444;">2.00</div>
<svg style="left:539.9px;top:518.90px" width="8" height="8" viewBox="0 0 8 8"><path d="M0 0 L4.6 0 L6.9 2.3 L6.9 7.5 L0 7.5 Z" fill="#333"/><path d="M4.6 0.2 L4.6 2.3 L6.7 2.3" fill="none" stroke="#aaa" stroke-width="0.5"/><rect x="1.6" y="3.2" width="3.7" height="3.2" fill="#8a8a8a"/><g fill="#444"><rect x="1.6" y="4.1" width="3.7" height="0.45"/><rect x="1.6" y="5.1" width="3.7" height="0.45"/></g></svg>
<div class="abs" style="left:699.6px;top:517.2999999999998px;width:21px;height:12px;background:#fff;border:1px solid #d9d9d9;border-radius:2px"></div>
<div class="t1" style="left:702.9px;top:516.88px;font-size:6.4px;line-height:12px;font-weight:normal;color:#444;">View</div>
<div class="abs" style="left:149px;top:533.9999999999999px;width:1px;height:21.2px;background:#ebebeb"></div>
<div class="abs" style="left:551px;top:533.9999999999999px;width:1px;height:21.2px;background:#ebebeb"></div>
<div class="abs" style="left:661px;top:533.9999999999999px;width:1px;height:21.2px;background:#ebebeb"></div>
<div class="abs" style="left:695px;top:533.9999999999999px;width:1px;height:21.2px;background:#ebebeb"></div>
<div class="t1" style="left:86.6px;top:538.00px;font-size:7.5px;line-height:12px;font-weight:normal;color:#444;">08/04/2024</div>
<div class="t1" style="left:153.5px;top:538.00px;font-size:7.5px;line-height:12px;font-weight:normal;color:#444;">AI in Civil Engineering: Real-World Applications</div>
<div class="t1" style="left:555.8px;top:538.00px;font-size:7.5px;line-height:12px;font-weight:normal;color:#444;">Any</div>
<div class="t1" style="left:666.1px;top:538.00px;font-size:7.5px;line-height:12px;font-weight:normal;color:#444;">3.00</div>
<svg style="left:539.9px;top:540.10px" width="8" height="8" viewBox="0 0 8 8"><path d="M0 0 L4.6 0 L6.9 2.3 L6.9 7.5 L0 7.5 Z" fill="#333"/><path d="M4.6 0.2 L4.6 2.3 L6.7 2.3" fill="none" stroke="#aaa" stroke-width="0.5"/><rect x="1.6" y="3.2" width="3.7" height="3.2" fill="#8a8a8a"/><g fill="#444"><rect x="1.6" y="4.1" width="3.7" height="0.45"/><rect x="1.6" y="5.1" width="3.7" height="0.45"/></g></svg>
<div class="abs" style="left:699.6px;top:538.4999999999999px;width:21px;height:12px;background:#fff;border:1px solid #d9d9d9;border-radius:2px"></div>
<div class="t1" style="left:702.9px;top:538.08px;font-size:6.4px;line-height:12px;font-weight:normal;color:#444;">View</div>
<div class="abs" style="left:81.5px;top:577px;width:50.5px;height:18.5px;background:#337ab7;border-radius:2.5px"></div>
<svg style="left:88px;top:582px" width="10" height="9" viewBox="0 0 10 9"><g fill="#fff"><rect x="0.3" y="0.8" width="1.6" height="1.5"/><rect x="0.3" y="3.3" width="1.6" height="1.5"/><rect x="0.3" y="5.8" width="1.6" height="1.5"/><rect x="2.5" y="0.8" width="6" height="1.5"/><rect x="2.5" y="3.3" width="6" height="1.5"/><rect x="2.5" y="5.8" width="6" height="1.5"/></g></svg>
<div class="t1" style="left:98.2px;top:581.15px;font-size:7.06px;line-height:12px;font-weight:bold;color:#fff;">View All</div>
</body></html>
